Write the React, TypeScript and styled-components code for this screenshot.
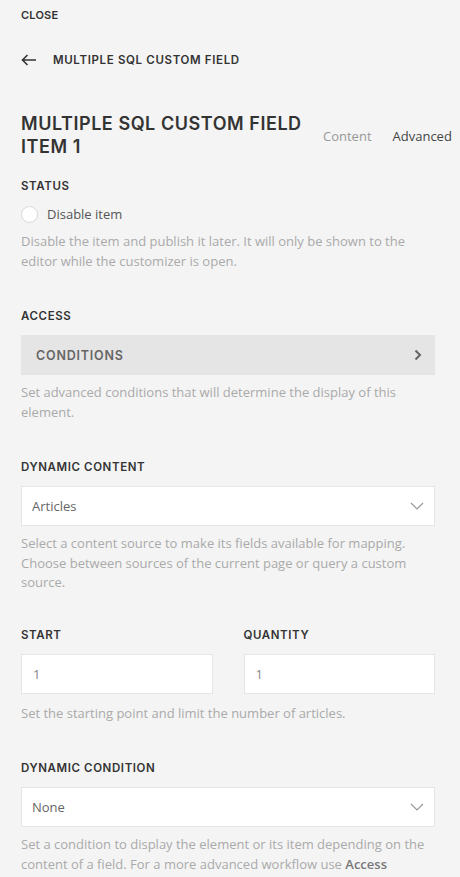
import React from 'react'
import styled, { createGlobalStyle } from 'styled-components'

const GlobalStyle = createGlobalStyle`
  html, body {
    margin: 0;
    padding: 0;
    background: #f4f4f4;
  }
  body {
    font-family: 'Open Sans', 'Liberation Sans', sans-serif;
    color: #444;
    -webkit-font-smoothing: antialiased;
  }
`

const headingFont = `'Inter', 'Open Sans', sans-serif`

const Panel = styled.div`
  padding: 5px 25px 20px 21px;
  overflow: hidden;
`

const Close = styled.div`
  font-family: ${headingFont};
  font-size: 11px;
  font-weight: 600;
  line-height: 20px;
  color: #333;
  letter-spacing: 0.2px;
`

const BackRow = styled.div`
  display: flex;
  align-items: center;
  gap: 16px;
  height: 20px;
  margin-top: 25px;
  font-family: ${headingFont};
  font-size: 11.5px;
  font-weight: 600;
  color: #333;
  letter-spacing: 0.65px;
`

const Header = styled.div`
  display: flex;
  align-items: center;
  margin-top: 42px;
  margin-right: -20px;
`

const Title = styled.h1`
  margin: 0;
  width: 285px;
  font-family: ${headingFont};
  font-size: 18px;
  font-weight: 600;
  line-height: 23px;
  color: #333;
  letter-spacing: 0.55px;
`

const Tabs = styled.div`
  display: flex;
  gap: 21px;
  margin-left: 17px;
  padding-top: 1px;
`

const Tab = styled.span<{ $active?: boolean }>`
  font-size: 13px;
  line-height: 20px;
  color: ${({ $active }) => ($active ? '#444' : '#999')};
`

const Section = styled.section<{ $gap?: number }>`
  margin-top: ${({ $gap = 35 }) => `${$gap}px`};
`

const Label = styled.div`
  font-family: ${headingFont};
  font-size: 11.5px;
  font-weight: 600;
  line-height: 20px;
  color: #333;
  letter-spacing: 0.6px;
  margin-bottom: 9px;
`

const RadioRow = styled.label`
  display: flex;
  align-items: center;
  gap: 9px;
  height: 20px;
  margin-top: -1px;
  margin-bottom: 1px;
  font-size: 13px;
  color: #555;
`

const Radio = styled.span`
  width: 17px;
  height: 17px;
  box-sizing: border-box;
  border-radius: 50%;
  background: #fff;
  border: 1px solid #d8d8d8;
`

const Help = styled.p<{ $gap?: number }>`
  margin: ${({ $gap = 8 }) => `${$gap}px`} 0 0;
  font-size: 13px;
  line-height: 19.5px;
  color: #aaa;

  strong {
    font-weight: 600;
    color: #777;
  }
`

const ConditionsButton = styled.div`
  display: flex;
  align-items: center;
  justify-content: space-between;
  height: 40px;
  padding: 0 13px 0 15px;
  background: #e5e5e5;
  font-family: ${headingFont};
  font-size: 12.5px;
  font-weight: 600;
  letter-spacing: 0.8px;
  color: #666;
`

const SelectBox = styled.div`
  display: flex;
  align-items: center;
  justify-content: space-between;
  height: 40px;
  box-sizing: border-box;
  padding: 0 10px 0 10px;
  background: #fff;
  border: 1px solid #e5e5e5;
  font-size: 13px;
  color: #666;
`

const Grid = styled.div`
  display: grid;
  grid-template-columns: 1fr 1fr;
  column-gap: 31px;
`

const InputBox = styled.div`
  height: 40px;
  box-sizing: border-box;
  padding: 0 11px;
  display: flex;
  align-items: center;
  background: #fff;
  border: 1px solid #e5e5e5;
  font-size: 13px;
  color: #888;
`

const ArrowLeft = () => (
  <svg width="16" height="12" viewBox="0 0 16 12" fill="none">
    <path d="M15 6H1.5M6.5 1L1.5 6l5 5" stroke="#333" strokeWidth="1.6" />
  </svg>
)

const ChevronRight = () => (
  <svg width="8" height="12" viewBox="0 0 8 12" fill="none">
    <path d="M1.5 1.5L6 6l-4.5 4.5" stroke="#666" strokeWidth="2" />
  </svg>
)

const ChevronDown = () => (
  <svg width="14" height="8" viewBox="0 0 14 8" fill="none">
    <path d="M1 1l6 6 6-6" stroke="#999" strokeWidth="1.2" />
  </svg>
)

export default function App() {
  return (
    <Panel>
      <GlobalStyle />
      <Close>CLOSE</Close>
      <BackRow>
        <ArrowLeft />
        MULTIPLE SQL CUSTOM FIELD
      </BackRow>
      <Header>
        <Title>MULTIPLE SQL CUSTOM FIELD ITEM 1</Title>
        <Tabs>
          <Tab>Content</Tab>
          <Tab $active>Advanced</Tab>
        </Tabs>
      </Header>

      <Section $gap={18}>
        <Label>STATUS</Label>
        <RadioRow>
          <Radio />
          Disable item
        </RadioRow>
        <Help>Disable the item and publish it later. It will only be shown to the editor while the customizer is open.</Help>
      </Section>

      <Section>
        <Label>ACCESS</Label>
        <ConditionsButton>
          CONDITIONS
          <ChevronRight />
        </ConditionsButton>
        <Help>Set advanced conditions that will determine the display of this element.</Help>
      </Section>

      <Section>
        <Label>DYNAMIC CONTENT</Label>
        <SelectBox>
          Articles
          <ChevronDown />
        </SelectBox>
        <Help>
          Select a content source to make its fields available for mapping. Choose between sources of the current page or query a
          custom source.
        </Help>
      </Section>

      <Section $gap={32}>
        <Grid>
          <div>
            <Label>START</Label>
            <InputBox>1</InputBox>
          </div>
          <div>
            <Label>QUANTITY</Label>
            <InputBox>1</InputBox>
          </div>
        </Grid>
        <Help $gap={10}>Set the starting point and limit the number of articles.</Help>
      </Section>

      <Section>
        <Label>DYNAMIC CONDITION</Label>
        <SelectBox>
          None
          <ChevronDown />
        </SelectBox>
        <Help>
          Set a condition to display the element or its item depending on the content of a field. For a more advanced workflow use{' '}
          <strong>Access</strong> settings.
        </Help>
      </Section>
    </Panel>
  )
}
